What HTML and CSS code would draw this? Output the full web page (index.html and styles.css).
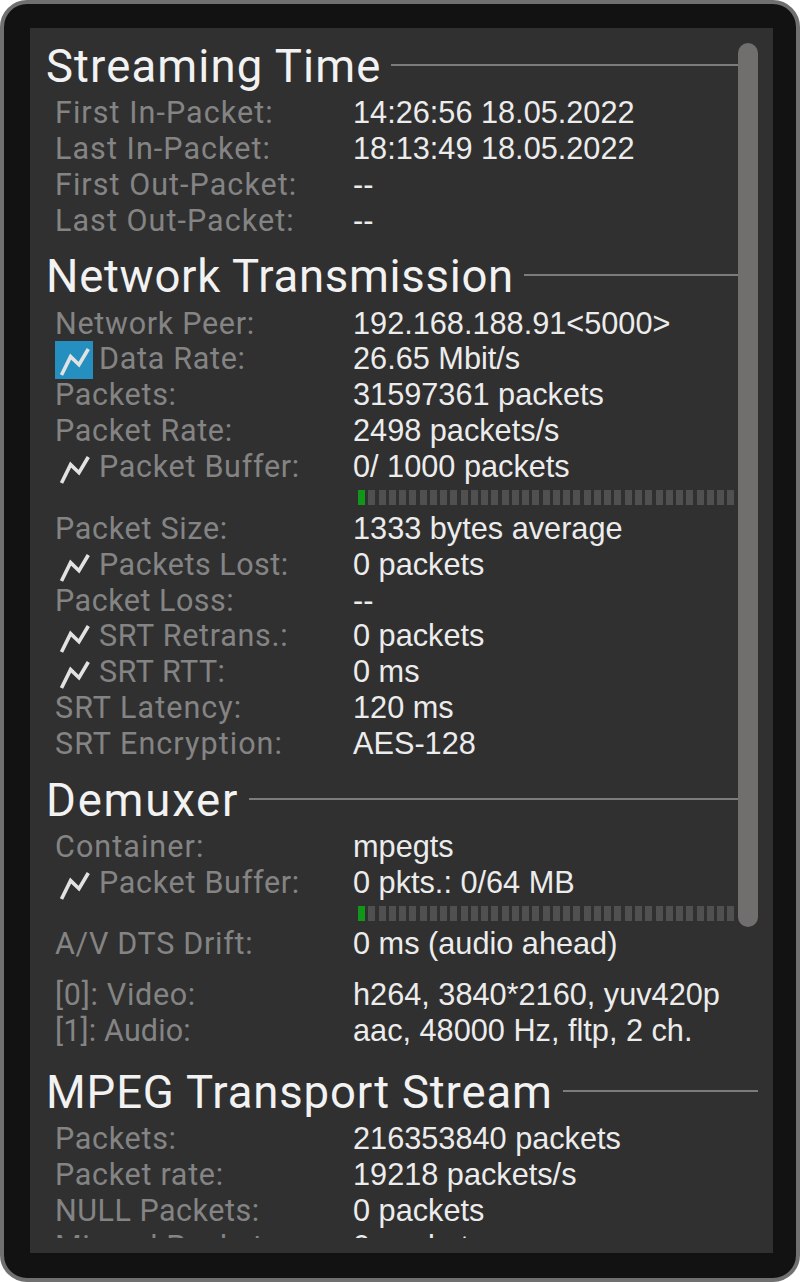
FILE: index.html
```html
<!doctype html>
<html lang="en">
<head>
  <meta charset="UTF-8">
  <meta name="viewport" content="width=device-width, initial-scale=1.0">
  <title>Stream Statistics</title>
  <link rel="stylesheet" href="styles.css">
</head>
<body>
  <svg class="sprite" width="0" height="0">
    <symbol id="graph" viewBox="0 0 38 38">
      <path d="M6.5 34 L15.6 15.6 L24 23.7 L33.3 8"/>
    </symbol>
  </svg>
  <div class="frame">
    <div class="panel">
      <div class="content">
        <section class="time">
          <h2>Streaming Time</h2>
          <div class="row"><span class="label wide">First In-Packet:</span><span class="value">14:26:56 18.05.2022</span></div>
          <div class="row"><span class="label wide">Last In-Packet:</span><span class="value">18:13:49 18.05.2022</span></div>
          <div class="row"><span class="label wide">First Out-Packet:</span><span class="value">--</span></div>
          <div class="row"><span class="label wide">Last Out-Packet:</span><span class="value">--</span></div>
        </section>

        <section class="network">
          <h2>Network Transmission</h2>
          <div class="row"><span class="label">Network Peer:</span><span class="value">192.168.188.91&lt;5000&gt;</span></div>
          <div class="row"><span class="label"><svg class="graph active"><use href="#graph"/></svg>Data Rate:</span><span class="value">26.65 Mbit/s</span></div>
          <div class="row"><span class="label">Packets:</span><span class="value">31597361 packets</span></div>
          <div class="row"><span class="label">Packet Rate:</span><span class="value">2498 packets/s</span></div>
          <div class="row"><span class="label"><svg class="graph"><use href="#graph"/></svg>Packet Buffer:</span><span class="value">0/ 1000 packets</span></div>
          <div class="meter"><div class="meter-fill"></div></div>
          <div class="row"><span class="label">Packet Size:</span><span class="value">1333 bytes average</span></div>
          <div class="row"><span class="label tight"><svg class="graph"><use href="#graph"/></svg>Packets Lost:</span><span class="value">0 packets</span></div>
          <div class="row"><span class="label tight">Packet Loss:</span><span class="value">--</span></div>
          <div class="row"><span class="label"><svg class="graph"><use href="#graph"/></svg>SRT Retrans.:</span><span class="value">0 packets</span></div>
          <div class="row"><span class="label tight"><svg class="graph"><use href="#graph"/></svg>SRT RTT:</span><span class="value">0 ms</span></div>
          <div class="row"><span class="label wide">SRT Latency:</span><span class="value">120 ms</span></div>
          <div class="row"><span class="label wide">SRT Encryption:</span><span class="value">AES-128</span></div>
        </section>

        <section class="demuxer">
          <h2>Demuxer</h2>
          <div class="row"><span class="label wide">Container:</span><span class="value">mpegts</span></div>
          <div class="row"><span class="label"><svg class="graph"><use href="#graph"/></svg>Packet Buffer:</span><span class="value">0 pkts.: 0/64 MB</span></div>
          <div class="meter"><div class="meter-fill"></div></div>
          <div class="row"><span class="label">A/V DTS Drift:</span><span class="value">0 ms (audio ahead)</span></div>
          <div class="streams">
            <div class="row"><span class="label">[0]: Video:</span><span class="value">h264, 3840*2160, yuv420p</span></div>
            <div class="row"><span class="label narrow">[1]: Audio:</span><span class="value">aac, 48000 Hz, fltp, 2 ch.</span></div>
          </div>
        </section>

        <section class="mpeg">
          <h2>MPEG Transport Stream</h2>
          <div class="row"><span class="label">Packets:</span><span class="value">216353840 packets</span></div>
          <div class="row"><span class="label">Packet rate:</span><span class="value">19218 packets/s</span></div>
          <div class="row"><span class="label tight">NULL Packets:</span><span class="value">0 packets</span></div>
          <div class="row"><span class="label">Missed Packets:</span><span class="value">0 packets</span></div>
        </section>
      </div>
      <div class="scrollbar"></div>
    </div>
  </div>
</body>
</html>
```

FILE: styles.css
```css
* {
  margin: 0;
  padding: 0;
  box-sizing: border-box;
}

body {
  background: #fff;
  height: 1282px;
  overflow: hidden;
}

.sprite {
  position: absolute;
}

.frame {
  width: 800px;
  height: 1282px;
  padding: 24px 24px 25px 26px;
  background: #121212;
  border: 4px solid #707070;
  border-radius: 27px;
}

.panel {
  position: relative;
  height: 1225px;
  width: 743px;
  padding: 15px 15px 15px 16px;
  background: #303030;
}

.content {
  height: 1195px;
  overflow: hidden;
}

section {
  margin-bottom: 14.6px;
}

h2 {
  display: flex;
  align-items: center;
  gap: 10px;
  height: 44px;
  margin-bottom: 8.2px;
  padding-top: 4px;
  font: 400 45.5px/40px Roboto, sans-serif;
  letter-spacing: 0.8px;
  white-space: nowrap;
  color: #f2f2f2;
}

h2::after {
  content: '';
  flex: 1;
  height: 2px;
  margin-top: -4px;
  background: #7c7c7c;
}

.time h2 {
  letter-spacing: 1.1px;
}

.network h2 {
  letter-spacing: 0.7px;
}

.demuxer h2 {
  letter-spacing: 1.8px;
}

.mpeg h2 {
  letter-spacing: 0.85px;
}

.row {
  display: grid;
  grid-template-columns: 298px 1fr;
  height: 35.9px;
  padding-left: 9px;
  line-height: 36px;
  white-space: nowrap;
}

.label {
  display: flex;
  align-items: center;
  font-family: Roboto, sans-serif;
  font-size: 30.5px;
  letter-spacing: 0.7px;
  color: #848484;
}

.label.wide {
  letter-spacing: 1.05px;
}

.label.tight {
  letter-spacing: 0.5px;
}

.label.narrow {
  letter-spacing: 0.15px;
}

.value {
  font-family: "Liberation Sans", Arial, sans-serif;
  font-size: 30.7px;
  color: #ececec;
}

.graph {
  flex: none;
  width: 38px;
  height: 38px;
  margin: 0 6px -2px 0;
  fill: none;
  stroke: #e2e2e2;
  stroke-width: 3.6;
}

.graph.active {
  background: #2590c0;
}

.meter {
  height: 15px;
  width: 377px;
  margin: 5px 0 5.8px 312px;
  background: repeating-linear-gradient(90deg, #505050 0 7px, transparent 7px 10.26px);
}

.meter-fill {
  width: 7px;
  height: 100%;
  background: #109618;
}

.streams {
  padding: 15px 0 5px;
}

.scrollbar {
  position: absolute;
  top: 15px;
  right: 15px;
  width: 20px;
  height: 884px;
  border-radius: 10px;
  background: #706f6d;
}
```
